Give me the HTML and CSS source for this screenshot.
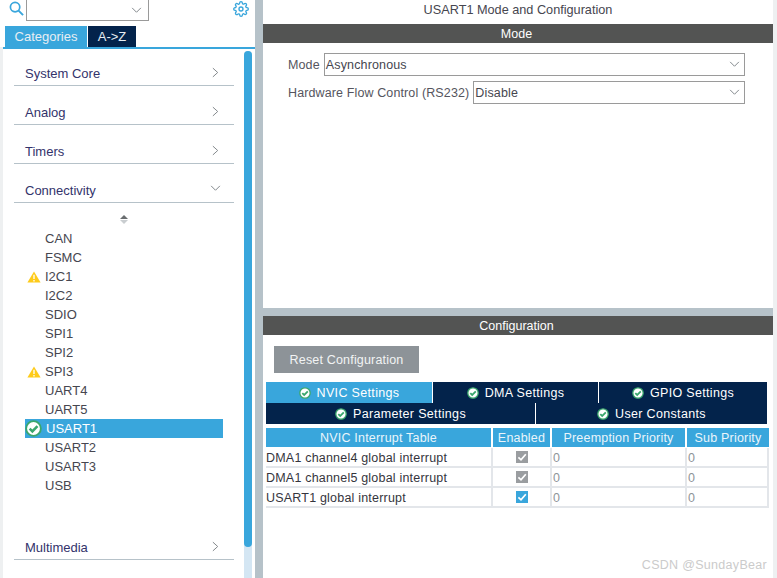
FILE: index.html
```html
<!DOCTYPE html>
<html lang="en">
<head>
<meta charset="utf-8">
<title>USART1 Mode and Configuration</title>
<link rel="stylesheet" href="styles.css">
</head>
<body>
<svg class="defs" width="0" height="0" aria-hidden="true">
  <symbol id="ok" viewBox="0 0 12 12"><circle cx="6" cy="6" r="5.2" fill="#fff" stroke="#3aa76d" stroke-width="1.3"/><path d="M3.3 6.1 5.2 8 8.8 4.3" fill="none" stroke="#3aa76d" stroke-width="1.8"/></symbol>
  <symbol id="chev-r" viewBox="0 0 8 12"><path d="M1 1l5.5 5L1 11" fill="none" stroke="#7f8488" stroke-width="1.1"/></symbol>
  <symbol id="chev-d" viewBox="0 0 12 8"><path d="M1 1l5 5 5-5" fill="none" stroke="#7f8488" stroke-width="1.1"/></symbol>
  <symbol id="warn" viewBox="0 0 14 12"><path d="M7 .5 13.6 11.5H.4z" fill="#fecb1a"/><path d="M7 3.8v4.2M7 9v1.4" stroke="#fff" stroke-width="1.3"/></symbol>
  <symbol id="tick" viewBox="0 0 12 12"><path d="M2.4 6.3 5 8.8 9.8 3.2" fill="none" stroke="#fff" stroke-width="1.7"/></symbol>
</svg>
<div class="app">
  <aside class="side">
    <div class="search">
      <svg class="search-icon" viewBox="0 0 16 16"><circle cx="6.5" cy="6.5" r="5" fill="none" stroke="#39a6dc" stroke-width="1.8"/><path d="M10.2 10.2 15 15" stroke="#39a6dc" stroke-width="2"/></svg>
      <div class="search-box"><svg class="chev-d-s"><use href="#chev-d"/></svg></div>
      <svg class="gear" viewBox="0 0 24 24" fill="none" stroke="#39a6dc" stroke-width="2"><circle cx="12" cy="12" r="3"/><path d="M19.4 15a1.65 1.65 0 0 0 .33 1.82l.06.06a2 2 0 0 1 0 2.83 2 2 0 0 1-2.83 0l-.06-.06a1.65 1.65 0 0 0-1.82-.33 1.65 1.65 0 0 0-1 1.51V21a2 2 0 0 1-2 2 2 2 0 0 1-2-2v-.09A1.65 1.65 0 0 0 9 19.4a1.65 1.65 0 0 0-1.82.33l-.06.06a2 2 0 0 1-2.83 0 2 2 0 0 1 0-2.83l.06-.06a1.65 1.65 0 0 0 .33-1.82 1.65 1.65 0 0 0-1.51-1H3a2 2 0 0 1-2-2 2 2 0 0 1 2-2h.09A1.65 1.65 0 0 0 4.6 9a1.65 1.65 0 0 0-.33-1.82l-.06-.06a2 2 0 0 1 0-2.83 2 2 0 0 1 2.83 0l.06.06a1.65 1.65 0 0 0 1.82.33H9a1.65 1.65 0 0 0 1-1.51V3a2 2 0 0 1 2-2 2 2 0 0 1 2 2v.09a1.65 1.65 0 0 0 1 1.51 1.65 1.65 0 0 0 1.82-.33l.06-.06a2 2 0 0 1 2.83 0 2 2 0 0 1 0 2.83l-.06.06a1.65 1.65 0 0 0-.33 1.82V9a1.65 1.65 0 0 0 1.51 1H21a2 2 0 0 1 2 2 2 2 0 0 1-2 2h-.09a1.65 1.65 0 0 0-1.51 1z"/></svg>
    </div>
    <div class="side-tabs">
      <div class="side-tab on">Categories</div>
      <div class="side-tab">A-&gt;Z</div>
    </div>
    <div class="side-lower">
      <div class="side-body">
        <div class="tree">
          <div class="group"><span>System Core</span><svg class="chev-r"><use href="#chev-r"/></svg></div>
          <div class="group"><span>Analog</span><svg class="chev-r"><use href="#chev-r"/></svg></div>
          <div class="group"><span>Timers</span><svg class="chev-r"><use href="#chev-r"/></svg></div>
          <div class="group"><span>Connectivity</span><svg class="chev-d"><use href="#chev-d"/></svg></div>
          <div class="sort"><span class="sort-up"></span><span class="sort-down"></span></div>
          <ul class="items">
            <li class="item">CAN</li>
            <li class="item">FSMC</li>
            <li class="item"><svg class="warn"><use href="#warn"/></svg>I2C1</li>
            <li class="item">I2C2</li>
            <li class="item">SDIO</li>
            <li class="item">SPI1</li>
            <li class="item">SPI2</li>
            <li class="item"><svg class="warn"><use href="#warn"/></svg>SPI3</li>
            <li class="item">UART4</li>
            <li class="item">UART5</li>
            <li class="item sel"><svg class="sel-ok"><use href="#ok"/></svg>USART1</li>
            <li class="item">USART2</li>
            <li class="item">USART3</li>
            <li class="item">USB</li>
          </ul>
          <div class="group last"><span>Multimedia</span><svg class="chev-r"><use href="#chev-r"/></svg></div>
        </div>
        <div class="track"><div class="thumb"></div></div>
      </div>
    </div>
  </aside>
  <main class="main">
    <section class="mode-pane">
      <div class="title">USART1 Mode and Configuration</div>
      <div class="bar">Mode</div>
      <div class="form">
        <div class="form-row"><label>Mode</label><div class="select"><span>Asynchronous</span><svg class="chev-d-s"><use href="#chev-d"/></svg></div></div>
        <div class="form-row"><label>Hardware Flow Control (RS232)</label><div class="select"><span>Disable</span><svg class="chev-d-s"><use href="#chev-d"/></svg></div></div>
      </div>
    </section>
    <section class="config-pane">
      <div class="bar">Configuration</div>
      <button class="reset">Reset Configuration</button>
      <div class="tabs">
        <div class="tab-row three">
          <div class="tab on"><svg class="ok"><use href="#ok"/></svg>NVIC Settings</div>
          <div class="tab"><svg class="ok"><use href="#ok"/></svg>DMA Settings</div>
          <div class="tab"><svg class="ok"><use href="#ok"/></svg>GPIO Settings</div>
        </div>
        <div class="tab-row two">
          <div class="tab"><svg class="ok"><use href="#ok"/></svg>Parameter Settings</div>
          <div class="tab"><svg class="ok"><use href="#ok"/></svg>User Constants</div>
        </div>
      </div>
      <div class="table">
        <div class="th">NVIC Interrupt Table</div><div class="th">Enabled</div><div class="th">Preemption Priority</div><div class="th">Sub Priority</div>
        <div class="td">DMA1 channel4 global interrupt</div><div class="td center"><span class="check off"><svg><use href="#tick"/></svg></span></div><div class="td num">0</div><div class="td num">0</div>
        <div class="td">DMA1 channel5 global interrupt</div><div class="td center"><span class="check off"><svg><use href="#tick"/></svg></span></div><div class="td num">0</div><div class="td num">0</div>
        <div class="td">USART1 global interrupt</div><div class="td center"><span class="check"><svg><use href="#tick"/></svg></span></div><div class="td num">0</div><div class="td num">0</div>
      </div>
      <div class="watermark">CSDN @SundayBear</div>
    </section>
  </main>
  <div class="edge"></div>
</div>
</body>
</html>
```
FILE: styles.css
```css
* { box-sizing: border-box; }
html, body { margin: 0; padding: 0; }
body { width: 777px; height: 578px; overflow: hidden; background: #fff; font-family: "Liberation Sans", Arial, sans-serif; font-size: 13px; color: #46464f; }
.defs { position: absolute; }
.app { display: grid; grid-template-columns: 255px 8px 510px 4px; width: 777px; height: 578px; background: #b6c2c9; }
.side { grid-column: 1; background: #fff; display: flex; flex-direction: column; height: 578px; overflow: hidden; }
.search { display: flex; height: 26px; padding-left: 9px; align-items: flex-start; }
.search-icon { width: 15px; height: 15px; margin-top: 1px; flex: none; }
.search-box { width: 123px; height: 21px; margin-left: 2px; border: 1px solid #9a9a9a; border-top: 0; display: flex; align-items: center; justify-content: flex-end; padding-right: 6px; }
.chev-d-s { width: 11px; height: 7px; flex: none; }
.gear { width: 16px; height: 16px; margin: 1px 0 0 84px; flex: none; }
.side-tabs { display: flex; height: 21px; padding-left: 5px; gap: 1px; }
.side-tab { background: #03234b; color: #e8eef3; font-size: 13px; text-align: center; line-height: 20px; width: 48px; padding-top: 1px; }
.side-tab.on { background: #39a6dc; width: 82px; }
.side-lower { flex: 1; background: #eef0f1; padding-left: 3px; display: flex; }
.side-body { flex: 1; border-top: 2px solid #39a6dc; display: flex; background: #fff; }
.tree { width: 241px; padding: 0 10px 0 11px; }
.group { height: 39px; border-bottom: 1px solid #b6c2c9; display: flex; justify-content: space-between; align-items: flex-end; padding: 0 15px 4px 11px; color: #33336b; font-size: 13px; line-height: 15px; width: 220px; }
.group:first-child { height: 37px; }
.group.last { margin-top: 26px; }
.chev-r { width: 7px; height: 11px; margin-bottom: 3px; flex: none; }
.chev-d { width: 11px; height: 7px; margin: 0 -2px 6px 0; flex: none; }
.sort { height: 26px; display: flex; flex-direction: column; align-items: center; gap: 1px; padding-top: 12px; width: 220px; }
.sort-up { border: 4px solid transparent; border-top: 0; border-bottom: 4px solid #6a6e70; }
.sort-down { border: 4px solid transparent; border-bottom: 0; border-top: 4px solid #c9cdd0; }
.items { list-style: none; margin: 0; padding: 0 0 0 11px; }
.item { height: 19px; line-height: 19px; padding-left: 20px; width: 198px; position: relative; font-size: 13px; }
.warn { position: absolute; left: 2px; top: 4px; width: 14px; height: 12px; }
.sel { background: #39a6dc; color: #fff; padding-left: 21px; }
.sel-ok { position: absolute; left: 0; top: 1px; width: 17px; height: 17px; }
.track { width: 8px; background: #d4e6f3; border-radius: 4px 4px 0 0; margin-top: 2px; }
.thumb { height: 496px; background: #39a6dc; border-radius: 4px; }
.main { grid-column: 3; display: flex; flex-direction: column; height: 578px; gap: 8px; }
.mode-pane { height: 308px; background: #fff; flex: none; }
.config-pane { flex: 1; background: #fff; width: 510px; position: relative; }
.title { height: 24px; line-height: 20px; text-align: center; font-size: 12.7px; color: #46464f; }
.bar { height: 19px; line-height: 20px; padding-right: 3px; background: #535453; color: #fff; text-align: center; font-size: 12.5px; }
.form { padding: 10px 28px 0 25px; display: flex; flex-direction: column; gap: 5px; width: 482px; }
.form-row { display: flex; align-items: center; gap: 4px; height: 23px; width: 457px; }
.form-row label { white-space: nowrap; color: #55555e; letter-spacing: .12px; font-size: 12.5px; }
.select { flex: 1; height: 23px; border: 1px solid #9a9a9a; display: flex; justify-content: space-between; align-items: center; padding: 0 4px 0 1px; font-size: 12.5px; color: #46464f; letter-spacing: .15px; }
.reset { display: block; margin: 11px 0 9px 11px; width: 145px; height: 27px; border: 0; background: #8d9398; color: #f2f3f4; font: 12.5px "Liberation Sans", Arial, sans-serif; letter-spacing: .18px; padding: 0; }
.tabs { padding-left: 3px; width: 507px; }
.tab-row { display: grid; width: 501px; color: #fff; }
.tab-row.three { grid-template-columns: 167px 166px 168px; height: 21px; }
.tab-row.two { grid-template-columns: 270px 231px; height: 20px; }
.tab { background: #03234b; border-right: 1px solid #fff; border-bottom: 1px solid #fff; display: flex; align-items: center; justify-content: center; gap: 6px; font-size: 12.5px; letter-spacing: .33px; line-height: 20px; padding-top: 1px; }
.tab:last-child { border-right: 0; }
.tab-row.two .tab { border-bottom: 0; }
.tab.on { background: #39a6dc; border-bottom: 1px solid #39a6dc; }
.ok { width: 12px; height: 12px; flex: none; }
.table { display: grid; grid-template-columns: 227px 59px 135px 82px; grid-auto-rows: 20px; margin: 5px 0 0 3px; width: 503px; }
.th { background: #39a6dc; color: #eaf5fb; border-right: 2px solid #fff; text-align: center; line-height: 20px; font-size: 12.5px; letter-spacing: .2px; height: 19px; }
.th:nth-child(4) { border-right: 0; }
.td { border-right: 2px solid #e3e6ea; border-bottom: 2px solid #e3e6ea; line-height: 21px; font-size: 12.5px; color: #35353d; letter-spacing: .2px; white-space: nowrap; height: 20px; }
.center { display: flex; justify-content: center; align-items: center; }
.num { color: #8e9499; padding-left: 1px; }
.check { width: 12px; height: 12px; background: #39a6dc; display: block; }
.check.off { background: #9a9da0; }
.check svg { display: block; width: 12px; height: 12px; }
.watermark { position: absolute; right: 6px; top: 242px; color: #cbcbcb; font-size: 12.5px; letter-spacing: .3px; }
.edge { grid-column: 4; background: #eef0f1; }
```
